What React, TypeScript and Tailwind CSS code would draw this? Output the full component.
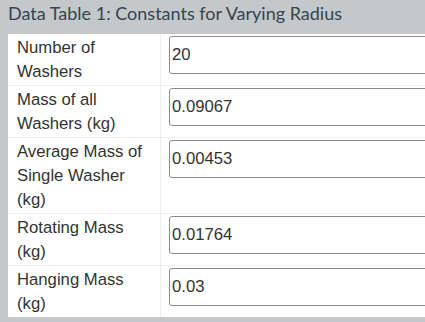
const rows = [
  { label: ["Number of", "Washers"], value: "20" },
  { label: ["Mass of all", "Washers (kg)"], value: "0.09067" },
  { label: ["Average Mass of", "Single Washer", "(kg)"], value: "0.00453" },
  { label: ["Rotating Mass", "(kg)"], value: "0.01764" },
  { label: ["Hanging Mass", "(kg)"], value: "0.03" },
];

export default function App() {
  return (
    <div className="h-[322px] w-[425px] overflow-hidden bg-[#c4c8ca]">
      <h3 className="pl-2 text-[18px] leading-[26px] text-[#34454f] font-['Lato',sans-serif]">
        Data Table 1: Constants for Varying Radius
      </h3>
      <div className="mt-[8px] ml-2 w-[520px] bg-white font-['Liberation_Sans',Arial,sans-serif] text-[16.7px] leading-[24px] text-[#333]">
        {rows.map((row, i) => (
          <div
            key={i}
            className={`flex ${i > 0 ? "border-t border-[#eeeeee]" : ""}`}
          >
            <div className="w-[153px] shrink-0 border-r border-[#eeeeee] pl-[9px] pt-[2px] pb-[1px]">
              {row.label.map((line, j) => (
                <div key={j}>{line}</div>
              ))}
            </div>
            <div className="flex-1 pl-[8px] pt-[2px]">
              <input
                readOnly
                value={row.value}
                className="h-[38px] w-full rounded-[3px] border border-[#8c8c8c] bg-white px-[2px] text-[16.7px] text-[#333] outline-none"
              />
            </div>
          </div>
        ))}
      </div>
    </div>
  );
}
